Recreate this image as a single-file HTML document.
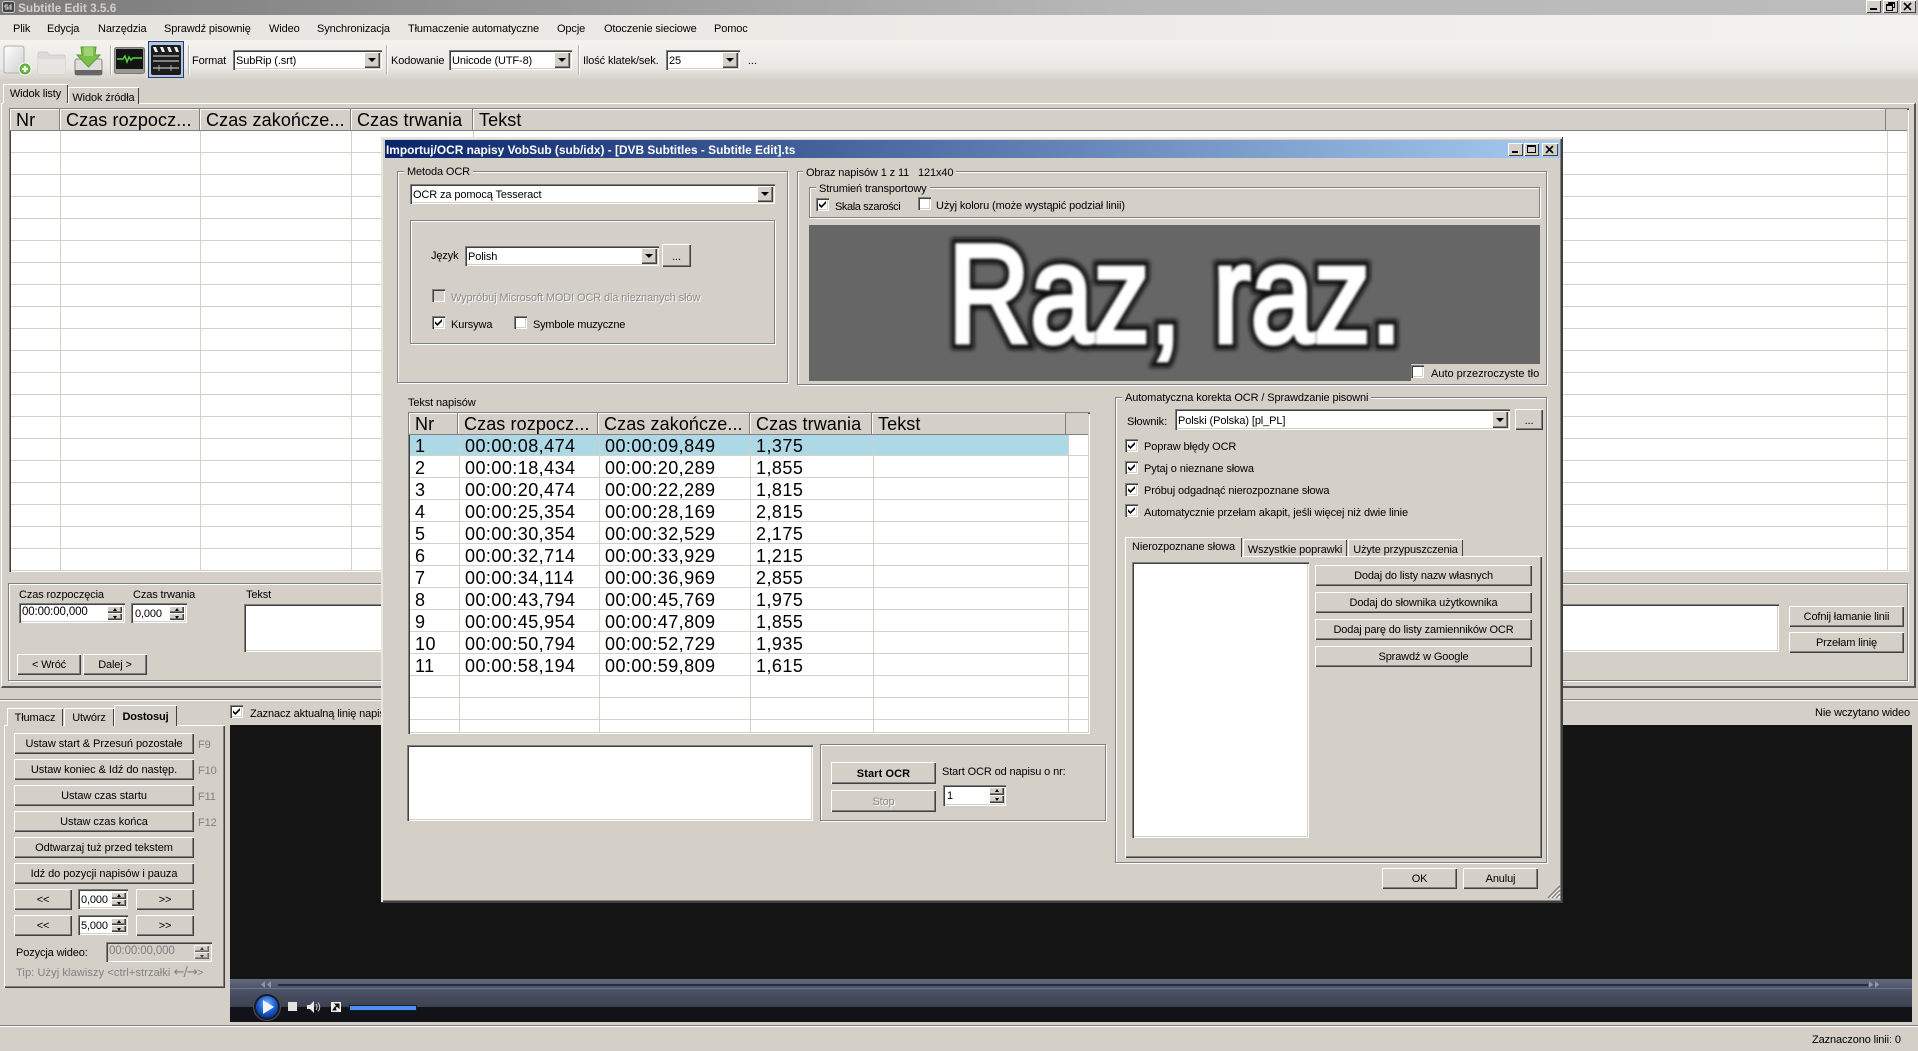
<!DOCTYPE html>
<html lang="pl"><head><meta charset="utf-8"><title>Subtitle Edit 3.5.6</title>
<style>
html,body{margin:0;padding:0;width:1918px;height:1051px;overflow:hidden;background:#d4d0c8}
body{position:relative;font:11px/14px "Liberation Sans","DejaVu Sans",sans-serif;color:#000;letter-spacing:-.12px}
div,span,svg{position:absolute;box-sizing:border-box}
.t{white-space:nowrap;height:14px;margin-top:1px}
.g{color:#808080}
.d{color:#8a8a8a;text-shadow:1px 1px 0 #fff}
.b{background:#d4d0c8;box-shadow:inset 1px 1px 0 #fff,inset -1px -1px 0 #404040,inset -2px -2px 0 #808080;text-align:center;white-space:nowrap;padding-top:1px;letter-spacing:-.15px}
.p{letter-spacing:-.06px}
.i{background:#fff;box-shadow:inset 1px 1px 0 #808080,inset 2px 2px 0 #404040,inset -1px -1px 0 #fff,inset -2px -2px 0 #d4d0c8;white-space:nowrap;line-height:16px}
.gb{border:1px solid #808080;box-shadow:1px 1px 0 #fff,inset 1px 1px 0 #fff}
.l{background:#d4d0c8;padding:0 3px;white-space:nowrap;height:14px;line-height:16px}
.ar{background:#d4d0c8;box-shadow:inset 1px 1px 0 #fff,inset -1px -1px 0 #404040,inset -2px -2px 0 #808080}
.ar:after{content:"";position:absolute;left:50%;top:50%;margin:-2px 0 0 -4px;border:4px solid transparent;border-top:4px solid #000;border-bottom:0}
.up:after{margin:-2px 0 0 -2px;border:2px solid transparent;border-bottom:3px solid #000;border-top:0}
.dn:after{margin:-1px 0 0 -2px;border:2px solid transparent;border-top:3px solid #000;border-bottom:0}
.cb{width:13px;height:13px;background:#fff;box-shadow:inset 1px 1px 0 #808080,inset 2px 2px 0 #404040,inset -1px -1px 0 #fff,inset -2px -2px 0 #d4d0c8}
.cb svg{left:2px;top:2px;width:9px;height:9px}
.h{background:#d4d0c8;border-right:1px solid #808080;border-bottom:1px solid #808080;box-shadow:inset 1px 1px 0 #fff;font-size:18px;line-height:23px;padding-left:6px;white-space:nowrap;top:0;height:22px;overflow:hidden;letter-spacing:.1px}
.r{height:22px;font-size:18px;line-height:22px;left:0}
.r span{top:0;white-space:nowrap;letter-spacing:.45px}
.v{width:1px;background:#d4d0c8}
.tab{background:#d4d0c8;box-shadow:inset 1px 1px 0 #fff,inset -1px 0 0 #404040;text-align:center;white-space:nowrap;line-height:18px;padding-top:1px}
.wb{background:#d4d0c8;box-shadow:inset 1px 1px 0 #fff,inset -1px -1px 0 #404040}
</style></head><body>
<svg width="0" height="0" style="left:0;top:0"><defs>
<symbol id="c" viewBox="0 0 9 9"><path d="M1 3.2l2.4 2.4L8 1v2.4L3.4 8 1 5.6z" fill="#000"/></symbol>
</defs></svg>

<!-- main title bar -->
<div style="left:0;top:0;width:1918px;height:15px;background:linear-gradient(90deg,#7a7a7a,#b9b9b9 60%,#bcbcbc)"></div>
<svg style="left:2px;top:1px" width="13" height="13" viewBox="0 0 13 13"><rect x=".5" y=".5" width="12" height="11" rx="2" fill="#444" stroke="#ccc"/><path d="M3 4h3M3 4v2h3v2H3M8 4h2M8 4v4h2M8 6h2" stroke="#ddd" fill="none"/></svg>
<div class="t" style="left:18px;top:0;font-weight:bold;font-size:11.8px;color:#d4d0c8;letter-spacing:0">Subtitle Edit 3.5.6</div>
<div class="wb" style="left:1866px;top:0;width:15px;height:13px"><div style="left:4px;top:8px;width:7px;height:2px;background:#000"></div></div>
<div class="wb" style="left:1883px;top:0;width:15px;height:13px"><svg width="15" height="13" style="left:0;top:0"><path d="M5.5 2.5h6v5h-2M5.5 2.5v2M3.5 4.5h6v6h-6z M3.5 5.5h6M5.5 3.5h6" fill="none" stroke="#000"/></svg></div>
<div class="wb" style="left:1900px;top:0;width:16px;height:13px"><svg width="16" height="13" style="left:0;top:0"><path d="M4 3l7 7M11 3l-7 7" stroke="#000" stroke-width="1.6"/></svg></div>

<!-- menu -->
<div style="left:0;top:15px;width:1918px;height:25px;background:linear-gradient(90deg,#e6e4df,#f3f2ef)"></div>
<div class="t" style="left:13px;top:21px">Plik</div>
<div class="t" style="left:47px;top:21px">Edycja</div>
<div class="t" style="left:98px;top:21px">Narzędzia</div>
<div class="t" style="left:164px;top:21px">Sprawdź pisownię</div>
<div class="t" style="left:269px;top:21px">Wideo</div>
<div class="t" style="left:317px;top:21px">Synchronizacja</div>
<div class="t" style="left:408px;top:21px">Tłumaczenie automatyczne</div>
<div class="t" style="left:557px;top:21px">Opcje</div>
<div class="t" style="left:604px;top:21px">Otoczenie sieciowe</div>
<div class="t" style="left:714px;top:21px">Pomoc</div>

<!-- toolbar -->
<div style="left:0;top:40px;width:1918px;height:39px;background:linear-gradient(#f4f3f0,#e9e8e4 70%,#d6d3cb)"></div>
<svg style="left:2px;top:45px" width="30" height="31" viewBox="0 0 30 31"><defs><linearGradient id="pg" x1="0" y1="0" x2="1" y2="1"><stop offset="0" stop-color="#fff"/><stop offset="1" stop-color="#cfcfcf"/></linearGradient><radialGradient id="gr"><stop offset="0" stop-color="#a8e06a"/><stop offset="1" stop-color="#4d9e2c"/></radialGradient></defs><path d="M2 4q0-3 3-3h14q3 0 3 3v22q0 2-2 2H4q-2 0-2-2z" fill="url(#pg)" stroke="#b0b0b0"/><circle cx="23" cy="24" r="6" fill="url(#gr)" stroke="#fff"/><path d="M20 24h6M23 21v6" stroke="#fff" stroke-width="2"/></svg>
<svg style="left:37px;top:48px" width="30" height="27" viewBox="0 0 30 27"><path d="M1 6q0-2 2-2h7l2 3h14q2 0 2 2v15q0 2-2 2H3q-2 0-2-2z" fill="#dcdbd7" stroke="#cfcec9"/><path d="M1 11h27v13q0 2-2 2H3q-2 0-2-2z" fill="#e6e5e1"/></svg>
<svg style="left:74px;top:45px" width="29" height="31" viewBox="0 0 29 31"><rect x="1" y="14" width="27" height="16" rx="2" fill="#ddd" stroke="#888"/><rect x="1" y="25" width="27" height="5" rx="1" fill="#666"/><path d="M7 2h15l-1 8h5L14.500 22 3 10h5z" fill="#7cc04a" stroke="#5b9a35"/><path d="M10 2h9v9h-9z" fill="#b6dd92" opacity=".6"/></svg>
<div style="left:110px;top:45px;width:1px;height:30px;background:#b5b2a9;box-shadow:1px 0 0 #fff"></div>
<svg style="left:114px;top:47px" width="31" height="27" viewBox="0 0 31 27"><rect x=".5" y=".5" width="30" height="26" rx="2" fill="#9a9a94" stroke="#777"/><rect x="2" y="2" width="27" height="20" fill="#141414"/><path d="M3 12h6l2-3 2 6 2-5 2 3 2-2h9" stroke="#4fdc3a" stroke-width="1.400" fill="none"/></svg>
<div style="left:148px;top:41px;width:36px;height:37px;background:#b6c6dc;border:1px solid #1f3d78"></div>
<svg style="left:151px;top:45px" width="30" height="30" viewBox="0 0 30 30"><rect x="0" y="0" width="30" height="30" rx="2" fill="#1c1c1c"/><path d="M2 2l3 0 2 5H4zM9 2h3l2 5h-3zM16 2h3l2 5h-3zM23 2h3l2 5h-3z" fill="#eee"/><path d="M2 11h26M2 16h26M2 23h26" stroke="#e8e8e8"/><path d="M8 20v6M20 20v6" stroke="#aaa"/></svg>
<div style="left:188px;top:45px;width:1px;height:30px;background:#b5b2a9;box-shadow:1px 0 0 #fff"></div>
<div class="t" style="left:192px;top:53px">Format</div>
<div class="i" style="left:233px;top:50px;width:149px;height:20px;padding:3px 0 0 3px">SubRip (.srt)<div class="ar" style="right:2px;top:2px;width:16px;height:16px"></div></div>
<div style="left:386px;top:45px;width:1px;height:30px;background:#b5b2a9;box-shadow:1px 0 0 #fff"></div>
<div class="t" style="left:391px;top:53px">Kodowanie</div>
<div class="i" style="left:449px;top:50px;width:123px;height:20px;padding:3px 0 0 3px">Unicode (UTF-8)<div class="ar" style="right:2px;top:2px;width:16px;height:16px"></div></div>
<div style="left:578px;top:45px;width:1px;height:30px;background:#b5b2a9;box-shadow:1px 0 0 #fff"></div>
<div class="t" style="left:583px;top:53px">Ilość klatek/sek.</div>
<div class="i" style="left:666px;top:50px;width:74px;height:20px;padding:3px 0 0 3px">25<div class="ar" style="right:2px;top:2px;width:16px;height:16px"></div></div>
<div class="t" style="left:748px;top:53px">...</div>

<!-- tabs -->
<div style="left:1px;top:103px;width:1915px;height:585px;border-top:1px solid #fff;border-left:1px solid #fff;border-right:2px solid #555;border-bottom:2px solid #555"></div>
<div class="tab" style="left:3px;top:84px;width:65px;height:20px;border-bottom:1px solid #d4d0c8">Widok listy</div>
<div class="tab" style="left:68px;top:87px;width:71px;height:17px;line-height:20px">Widok źródła</div>

<!-- main list -->
<div class="i" style="left:9px;top:108px;width:1900px;height:464px;background:#fff"></div>
<div style="left:11px;top:131px;width:1896px;height:440px;background:repeating-linear-gradient(to bottom,#fff 0,#fff 21px,#d4d0c8 21px,#d4d0c8 22px)"></div>
<div class="v" style="left:60px;top:131px;height:440px"></div>
<div class="v" style="left:200px;top:131px;height:440px"></div>
<div class="v" style="left:351px;top:131px;height:440px"></div>
<div class="v" style="left:473px;top:131px;height:440px"></div>
<div class="v" style="left:1887px;top:131px;height:440px"></div>
<div style="left:10px;top:109px;width:1897px;height:22px;background:#d4d0c8;border-bottom:1px solid #808080">
<div class="h" style="left:0;width:50px">Nr</div>
<div class="h" style="left:50px;width:140px">Czas rozpocz...</div>
<div class="h" style="left:190px;width:151px">Czas zakończe...</div>
<div class="h" style="left:341px;width:122px">Czas trwania</div>
<div class="h" style="left:463px;width:1413px">Tekst</div>
</div>

<!-- lower edit group -->
<div class="gb" style="left:8px;top:583px;width:1900px;height:98px"></div>
<div class="t" style="left:19px;top:587px">Czas rozpoczęcia</div>
<div class="i" style="left:19px;top:603px;width:106px;height:20px;padding:1px 0 0 3px;font-size:11.5px">00:00:00,000
<div class="ar up" style="left:88px;top:3px;width:15px;height:7px"></div><div class="ar dn" style="left:88px;top:10px;width:15px;height:7px"></div></div>
<div class="t" style="left:133px;top:587px">Czas trwania</div>
<div class="i" style="left:131px;top:603px;width:56px;height:20px;padding:3px 0 0 4px">0,000
<div class="ar up" style="left:38px;top:3px;width:15px;height:7px"></div><div class="ar dn" style="left:38px;top:10px;width:15px;height:7px"></div></div>
<div class="t" style="left:246px;top:587px">Tekst</div>
<div class="i" style="left:244px;top:604px;width:1535px;height:48px"></div>
<div class="b" style="left:17px;top:654px;width:64px;height:21px;line-height:21px">&lt; Wróć</div>
<div class="b" style="left:83px;top:654px;width:64px;height:21px;line-height:21px">Dalej &gt;</div>
<div class="b" style="left:1789px;top:606px;width:115px;height:21px;line-height:21px">Cofnij łamanie linii</div>
<div class="b" style="left:1789px;top:632px;width:115px;height:21px;line-height:21px">Przełam linię</div>

<!-- splitter line -->
<div style="left:0;top:699px;width:1918px;height:1px;background:#808080"></div>
<div style="left:0;top:700px;width:1918px;height:1px;background:#fff"></div>

<!-- left tabs panel -->
<div style="left:4px;top:725px;width:221px;height:263px;background:#d4d0c8;box-shadow:inset 1px 1px 0 #fff,inset -1px -1px 0 #404040,inset -2px -2px 0 #808080"></div>
<div class="tab" style="left:7px;top:708px;width:56px;height:18px;line-height:18px">Tłumacz</div>
<div class="tab" style="left:64px;top:708px;width:50px;height:18px;line-height:18px">Utwórz</div>
<div class="tab" style="left:114px;top:705px;width:63px;height:21px;line-height:22px;font-weight:bold">Dostosuj</div>
<div class="b p" style="left:14px;top:733px;width:180px;height:21px;line-height:21px">Ustaw start &amp; Przesuń pozostałe</div>
<div class="t g" style="left:198px;top:737px">F9</div>
<div class="b p" style="left:14px;top:759px;width:180px;height:21px;line-height:21px">Ustaw koniec &amp; Idź do następ.</div>
<div class="t g" style="left:198px;top:763px">F10</div>
<div class="b p" style="left:14px;top:785px;width:180px;height:21px;line-height:21px">Ustaw czas startu</div>
<div class="t g" style="left:198px;top:789px">F11</div>
<div class="b p" style="left:14px;top:811px;width:180px;height:21px;line-height:21px">Ustaw czas końca</div>
<div class="t g" style="left:198px;top:815px">F12</div>
<div class="b p" style="left:14px;top:837px;width:180px;height:21px;line-height:21px">Odtwarzaj tuż przed tekstem</div>
<div class="b p" style="left:14px;top:863px;width:180px;height:21px;line-height:21px">Idź do pozycji napisów i pauza</div>
<div class="b" style="left:14px;top:889px;width:58px;height:21px;line-height:21px">&lt;&lt;</div>
<div class="i" style="left:78px;top:889px;width:50px;height:20px;padding:3px 0 0 3px">0,000
<div class="ar up" style="left:33px;top:3px;width:15px;height:7px"></div><div class="ar dn" style="left:33px;top:10px;width:15px;height:7px"></div></div>
<div class="b" style="left:136px;top:889px;width:58px;height:21px;line-height:21px">&gt;&gt;</div>
<div class="b" style="left:14px;top:915px;width:58px;height:21px;line-height:21px">&lt;&lt;</div>
<div class="i" style="left:78px;top:915px;width:50px;height:20px;padding:3px 0 0 3px">5,000
<div class="ar up" style="left:33px;top:3px;width:15px;height:7px"></div><div class="ar dn" style="left:33px;top:10px;width:15px;height:7px"></div></div>
<div class="b" style="left:136px;top:915px;width:58px;height:21px;line-height:21px">&gt;&gt;</div>
<div class="t" style="left:16px;top:945px">Pozycja wideo:</div>
<div class="i" style="left:106px;top:942px;width:106px;height:20px;padding:1px 0 0 3px;background:#d4d0c8;color:#808080;font-size:11.5px">00:00:00,000
<div class="ar up" style="left:88px;top:3px;width:15px;height:7px;opacity:.7"></div><div class="ar dn" style="left:88px;top:10px;width:15px;height:7px;opacity:.7"></div></div>
<div class="t g" style="left:16px;top:964px;letter-spacing:.1px">Tip: Użyj klawiszy &lt;ctrl+strzałki <b style="font:13px 'DejaVu Sans',sans-serif;letter-spacing:-1px">←/→</b>&gt;</div>

<!-- video area -->
<div class="cb" style="left:230px;top:705px"><svg><use href="#c"/></svg></div>
<div class="t" style="left:250px;top:706px">Zaznacz aktualną linię napisów</div>
<div class="t" style="left:1815px;top:705px">Nie wczytano wideo</div>
<div style="left:230px;top:725px;width:1682px;height:254px;background:#141414"></div>
<div style="left:230px;top:979px;width:1682px;height:28px;background:linear-gradient(#636a7e,#4f566a 30%,#3c4150)"></div>
<div style="left:230px;top:1007px;width:1682px;height:15px;background:#111318"></div>
<div style="left:278px;top:984px;width:1590px;height:2px;background:#2a2d38"></div>
<div style="left:230px;top:988px;width:1682px;height:1px;background:#6d7488"></div>
<svg style="left:260px;top:980px" width="12" height="10"><path d="M5 1v7L1 4.500zM11 1v7L7 4.500z" fill="#8f95a5"/></svg>
<svg style="left:1868px;top:980px" width="12" height="10"><path d="M1 1v7l4-3.500zM7 1v7l4-3.500z" fill="#8f95a5"/></svg>
<svg style="left:253px;top:993px" width="28" height="28" viewBox="0 0 28 28"><defs><radialGradient id="pb" cx=".5" cy=".35" r=".7"><stop offset="0" stop-color="#7fb6f5"/><stop offset=".55" stop-color="#1f5fd0"/><stop offset="1" stop-color="#062a78"/></radialGradient></defs><circle cx="14" cy="14" r="13.500" fill="#1a1d28" stroke="#4a4f60"/><circle cx="14" cy="14" r="11" fill="url(#pb)"/><path d="M10 7l11 7-11 7z" fill="#eef4ff"/></svg>
<div style="left:288px;top:1002px;width:9px;height:9px;background:#e2e2e2"></div>
<svg style="left:306px;top:1000px" width="16" height="14" viewBox="0 0 16 14"><path d="M1 5h3l4-4v12l-4-4H1z" fill="#e8e8e8"/><path d="M10 4q2 3 0 6M12 2.500q3.500 4.500 0 9" stroke="#ccc" fill="none"/></svg>
<svg style="left:331px;top:1002px" width="10" height="10" viewBox="0 0 10 10"><rect width="10" height="10" fill="#eee"/><path d="M8 2L3 7M8 2v4L4 2zM2 8l2-3 1 3z" fill="#111" stroke="#111"/></svg>
<div style="left:349px;top:1005px;width:66px;height:4px;background:#4f90ea;border:1px solid #0e1c3a;box-sizing:content-box"></div>

<!-- status -->
<div style="left:0;top:1025px;width:1918px;height:1px;background:#808080"></div>
<div style="left:0;top:1026px;width:1918px;height:1px;background:#fff"></div>
<div class="t" style="left:1812px;top:1032px">Zaznaczono linii: 0</div>

<!-- DIALOG -->
<div style="left:381px;top:137px;width:1182px;height:766px;background:#d4d0c8;box-shadow:inset 2px 2px 0 #e8e6e0,inset -1px -1px 0 #404040,inset -2px -2px 0 #808080;border-right:1px solid #404040;border-bottom:1px solid #404040"></div>
<div style="left:385px;top:140px;width:1175px;height:18px;background:linear-gradient(90deg,#0a246a,#a6caf0)"></div>
<div class="t" style="left:386px;top:142px;font-weight:bold;font-size:11.9px;color:#fff;letter-spacing:0">Importuj/OCR napisy VobSub (sub/idx) - [DVB Subtitles - Subtitle Edit].ts</div>
<div class="wb" style="left:1508px;top:143px;width:15px;height:13px"><div style="left:4px;top:8px;width:6px;height:2px;background:#000"></div></div>
<div class="wb" style="left:1524px;top:143px;width:15px;height:13px"><div style="left:3px;top:2px;width:9px;height:8px;border:1px solid #000;border-top-width:2px"></div></div>
<div class="wb" style="left:1542px;top:143px;width:16px;height:13px"><svg width="16" height="13" style="left:0;top:0"><path d="M4 3l7 7M11 3l-7 7" stroke="#000" stroke-width="1.600"/></svg></div>

<!-- Metoda OCR -->
<div class="gb" style="left:397px;top:171px;width:391px;height:212px"></div>
<div class="l" style="left:404px;top:164px">Metoda OCR</div>
<div class="i" style="left:410px;top:184px;width:365px;height:20px;padding:3px 0 0 3px">OCR za pomocą Tesseract<div class="ar" style="right:2px;top:2px;width:16px;height:16px"></div></div>
<div class="gb" style="left:410px;top:220px;width:365px;height:124px"></div>
<div class="t" style="left:431px;top:248px">Język</div>
<div class="i" style="left:465px;top:246px;width:194px;height:20px;padding:3px 0 0 3px">Polish<div class="ar" style="right:2px;top:2px;width:16px;height:16px"></div></div>
<div class="b" style="left:662px;top:244px;width:29px;height:23px;line-height:24px">...</div>
<div class="cb" style="left:432px;top:289px;background:#d4d0c8"></div>
<div class="t d" style="left:451px;top:290px">Wypróbuj Microsoft MODI OCR dla nieznanych słów</div>
<div class="cb" style="left:432px;top:316px"><svg><use href="#c"/></svg></div>
<div class="t" style="left:451px;top:317px">Kursywa</div>
<div class="cb" style="left:514px;top:316px"></div>
<div class="t" style="left:533px;top:317px;letter-spacing:-.2px">Symbole muzyczne</div>

<!-- Obraz napisów -->
<div class="gb" style="left:797px;top:171px;width:750px;height:214px"></div>
<div class="l" style="left:803px;top:165px">Obraz napisów 1 z 11 &nbsp; 121x40</div>
<div class="gb" style="left:809px;top:187px;width:731px;height:31px"></div>
<div class="l" style="left:816px;top:181px">Strumień transportowy</div>
<div class="cb" style="left:816px;top:198px"><svg><use href="#c"/></svg></div>
<div class="t" style="left:835px;top:199px;letter-spacing:-.4px">Skala szarości</div>
<div class="cb" style="left:918px;top:197px"></div>
<div class="t" style="left:936px;top:198px">Użyj koloru (może wystąpić podział linii)</div>
<div style="left:809px;top:225px;width:731px;height:156px;background:#666;overflow:hidden">
<svg style="left:0;top:0" width="731" height="156" viewBox="0 0 731 156"><defs><filter id="b3" x="-10%" y="-30%" width="120%" height="160%"><feGaussianBlur stdDeviation="2.200"/></filter><filter id="b1" x="-10%" y="-30%" width="120%" height="160%"><feGaussianBlur stdDeviation="1.300"/></filter></defs>
<text x="139" y="117" font-family="Liberation Sans" font-size="140" textLength="454" lengthAdjust="spacingAndGlyphs" fill="#111" stroke="#111" stroke-width="15" filter="url(#b3)">Raz, raz.</text>
<text x="139" y="117" font-family="Liberation Sans" font-size="140" textLength="454" lengthAdjust="spacingAndGlyphs" fill="#fff" stroke="#fff" stroke-width="5" filter="url(#b1)">Raz, raz.</text></svg>
</div>
<div style="left:1411px;top:364px;width:129px;height:17px;background:#d4d0c8"></div>
<div class="cb" style="left:1411px;top:365px"></div>
<div class="t" style="left:1431px;top:366px;letter-spacing:0">Auto przezroczyste tło</div>

<!-- Tekst napisów -->
<div class="t" style="left:408px;top:395px">Tekst napisów</div>
<div class="i" style="left:408px;top:412px;width:682px;height:322px"></div>
<div style="left:410px;top:434px;width:678px;height:298px;background:repeating-linear-gradient(to bottom,#fff 0,#fff 21px,#d4d0c8 21px,#d4d0c8 22px)"></div>
<div style="left:410px;top:434px;width:658px;height:21px;background:#add8e6"></div>
<div class="v" style="left:459px;top:434px;height:298px"></div>
<div class="v" style="left:599px;top:434px;height:298px"></div>
<div class="v" style="left:750px;top:434px;height:298px"></div>
<div class="v" style="left:873px;top:434px;height:298px"></div>
<div class="v" style="left:1068px;top:434px;height:298px"></div>
<div style="left:410px;top:413px;width:678px;height:22px;background:#d4d0c8;border-bottom:1px solid #808080">
<div class="h" style="left:-1px;width:49px">Nr</div>
<div class="h" style="left:48px;width:140px">Czas rozpocz...</div>
<div class="h" style="left:188px;width:152px">Czas zakończe...</div>
<div class="h" style="left:340px;width:122px">Czas trwania</div>
<div class="h" style="left:462px;width:194px">Tekst</div>
</div>
<div style="left:0;top:0;width:0;height:0">
<div class="r" style="top:435px"><span style="left:415px">1</span><span style="left:465px">00:00:08,474</span><span style="left:605px">00:00:09,849</span><span style="left:756px">1,375</span></div>
<div class="r" style="top:457px"><span style="left:415px">2</span><span style="left:465px">00:00:18,434</span><span style="left:605px">00:00:20,289</span><span style="left:756px">1,855</span></div>
<div class="r" style="top:479px"><span style="left:415px">3</span><span style="left:465px">00:00:20,474</span><span style="left:605px">00:00:22,289</span><span style="left:756px">1,815</span></div>
<div class="r" style="top:501px"><span style="left:415px">4</span><span style="left:465px">00:00:25,354</span><span style="left:605px">00:00:28,169</span><span style="left:756px">2,815</span></div>
<div class="r" style="top:523px"><span style="left:415px">5</span><span style="left:465px">00:00:30,354</span><span style="left:605px">00:00:32,529</span><span style="left:756px">2,175</span></div>
<div class="r" style="top:545px"><span style="left:415px">6</span><span style="left:465px">00:00:32,714</span><span style="left:605px">00:00:33,929</span><span style="left:756px">1,215</span></div>
<div class="r" style="top:567px"><span style="left:415px">7</span><span style="left:465px">00:00:34,114</span><span style="left:605px">00:00:36,969</span><span style="left:756px">2,855</span></div>
<div class="r" style="top:589px"><span style="left:415px">8</span><span style="left:465px">00:00:43,794</span><span style="left:605px">00:00:45,769</span><span style="left:756px">1,975</span></div>
<div class="r" style="top:611px"><span style="left:415px">9</span><span style="left:465px">00:00:45,954</span><span style="left:605px">00:00:47,809</span><span style="left:756px">1,855</span></div>
<div class="r" style="top:633px"><span style="left:415px">10</span><span style="left:465px">00:00:50,794</span><span style="left:605px">00:00:52,729</span><span style="left:756px">1,935</span></div>
<div class="r" style="top:655px"><span style="left:415px">11</span><span style="left:465px">00:00:58,194</span><span style="left:605px">00:00:59,809</span><span style="left:756px">1,615</span></div>
</div>

<!-- bottom of dialog left -->
<div class="i" style="left:407px;top:745px;width:406px;height:76px"></div>
<div class="gb" style="left:820px;top:744px;width:286px;height:77px"></div>
<div class="b" style="left:831px;top:762px;width:105px;height:22px;line-height:22px;font-weight:bold;letter-spacing:.1px">Start OCR</div>
<div class="b d" style="left:831px;top:790px;width:105px;height:22px;line-height:22px">Stop</div>
<div class="t" style="left:942px;top:764px">Start OCR od napisu o nr:</div>
<div class="i" style="left:943px;top:785px;width:63px;height:21px;padding:3px 0 0 4px">1
<div class="ar up" style="left:46px;top:2px;width:15px;height:8px"></div><div class="ar dn" style="left:46px;top:10px;width:15px;height:8px"></div></div>

<!-- Automatyczna korekta -->
<div class="gb" style="left:1115px;top:397px;width:432px;height:466px"></div>
<div class="l" style="left:1122px;top:390px">Automatyczna korekta OCR / Sprawdzanie pisowni</div>
<div class="t" style="left:1127px;top:414px">Słownik:</div>
<div class="i" style="left:1175px;top:409px;width:335px;height:21px;padding:4px 0 0 3px">Polski (Polska) [pl_PL]<div class="ar" style="right:2px;top:2px;width:16px;height:17px"></div></div>
<div class="b" style="left:1515px;top:409px;width:28px;height:21px;line-height:22px">...</div>
<div class="cb" style="left:1125px;top:439px"><svg><use href="#c"/></svg></div>
<div class="t" style="left:1144px;top:439px">Popraw błędy OCR</div>
<div class="cb" style="left:1125px;top:461px"><svg><use href="#c"/></svg></div>
<div class="t" style="left:1144px;top:461px">Pytaj o nieznane słowa</div>
<div class="cb" style="left:1125px;top:483px"><svg><use href="#c"/></svg></div>
<div class="t" style="left:1144px;top:483px">Próbuj odgadnąć nierozpoznane słowa</div>
<div class="cb" style="left:1125px;top:504px"><svg><use href="#c"/></svg></div>
<div class="t" style="left:1144px;top:505px">Automatycznie przełam akapit, jeśli więcej niż dwie linie</div>
<div style="left:1125px;top:556px;width:417px;height:302px;background:#d4d0c8;box-shadow:inset 1px 1px 0 #fff,inset -1px -1px 0 #404040,inset -2px -2px 0 #808080"></div>
<div class="tab" style="left:1125px;top:537px;width:117px;height:20px;line-height:18px">Nierozpoznane słowa</div>
<div class="tab" style="left:1243px;top:539px;width:104px;height:17px;line-height:20px">Wszystkie poprawki</div>
<div class="tab" style="left:1348px;top:539px;width:115px;height:17px;line-height:20px">Użyte przypuszczenia</div>
<div class="i" style="left:1132px;top:562px;width:177px;height:276px"></div>
<div class="b" style="left:1315px;top:565px;width:217px;height:21px;line-height:21px">Dodaj do listy nazw własnych</div>
<div class="b" style="left:1315px;top:592px;width:217px;height:21px;line-height:21px">Dodaj do słownika użytkownika</div>
<div class="b" style="left:1315px;top:619px;width:217px;height:21px;line-height:21px">Dodaj parę do listy zamienników OCR</div>
<div class="b" style="left:1315px;top:646px;width:217px;height:21px;line-height:21px">Sprawdź w Google</div>
<div class="b" style="left:1382px;top:868px;width:75px;height:21px;line-height:21px">OK</div>
<div class="b" style="left:1463px;top:868px;width:75px;height:21px;line-height:21px">Anuluj</div>
<svg style="left:1547px;top:885px" width="14" height="14"><path d="M13 1L1 13M13 5L5 13M13 9L9 13" stroke="#808080" stroke-width="1.500"/><path d="M13 3L3 13M13 7L7 13M13 11L11 13" stroke="#fff"/></svg>
</body></html>
